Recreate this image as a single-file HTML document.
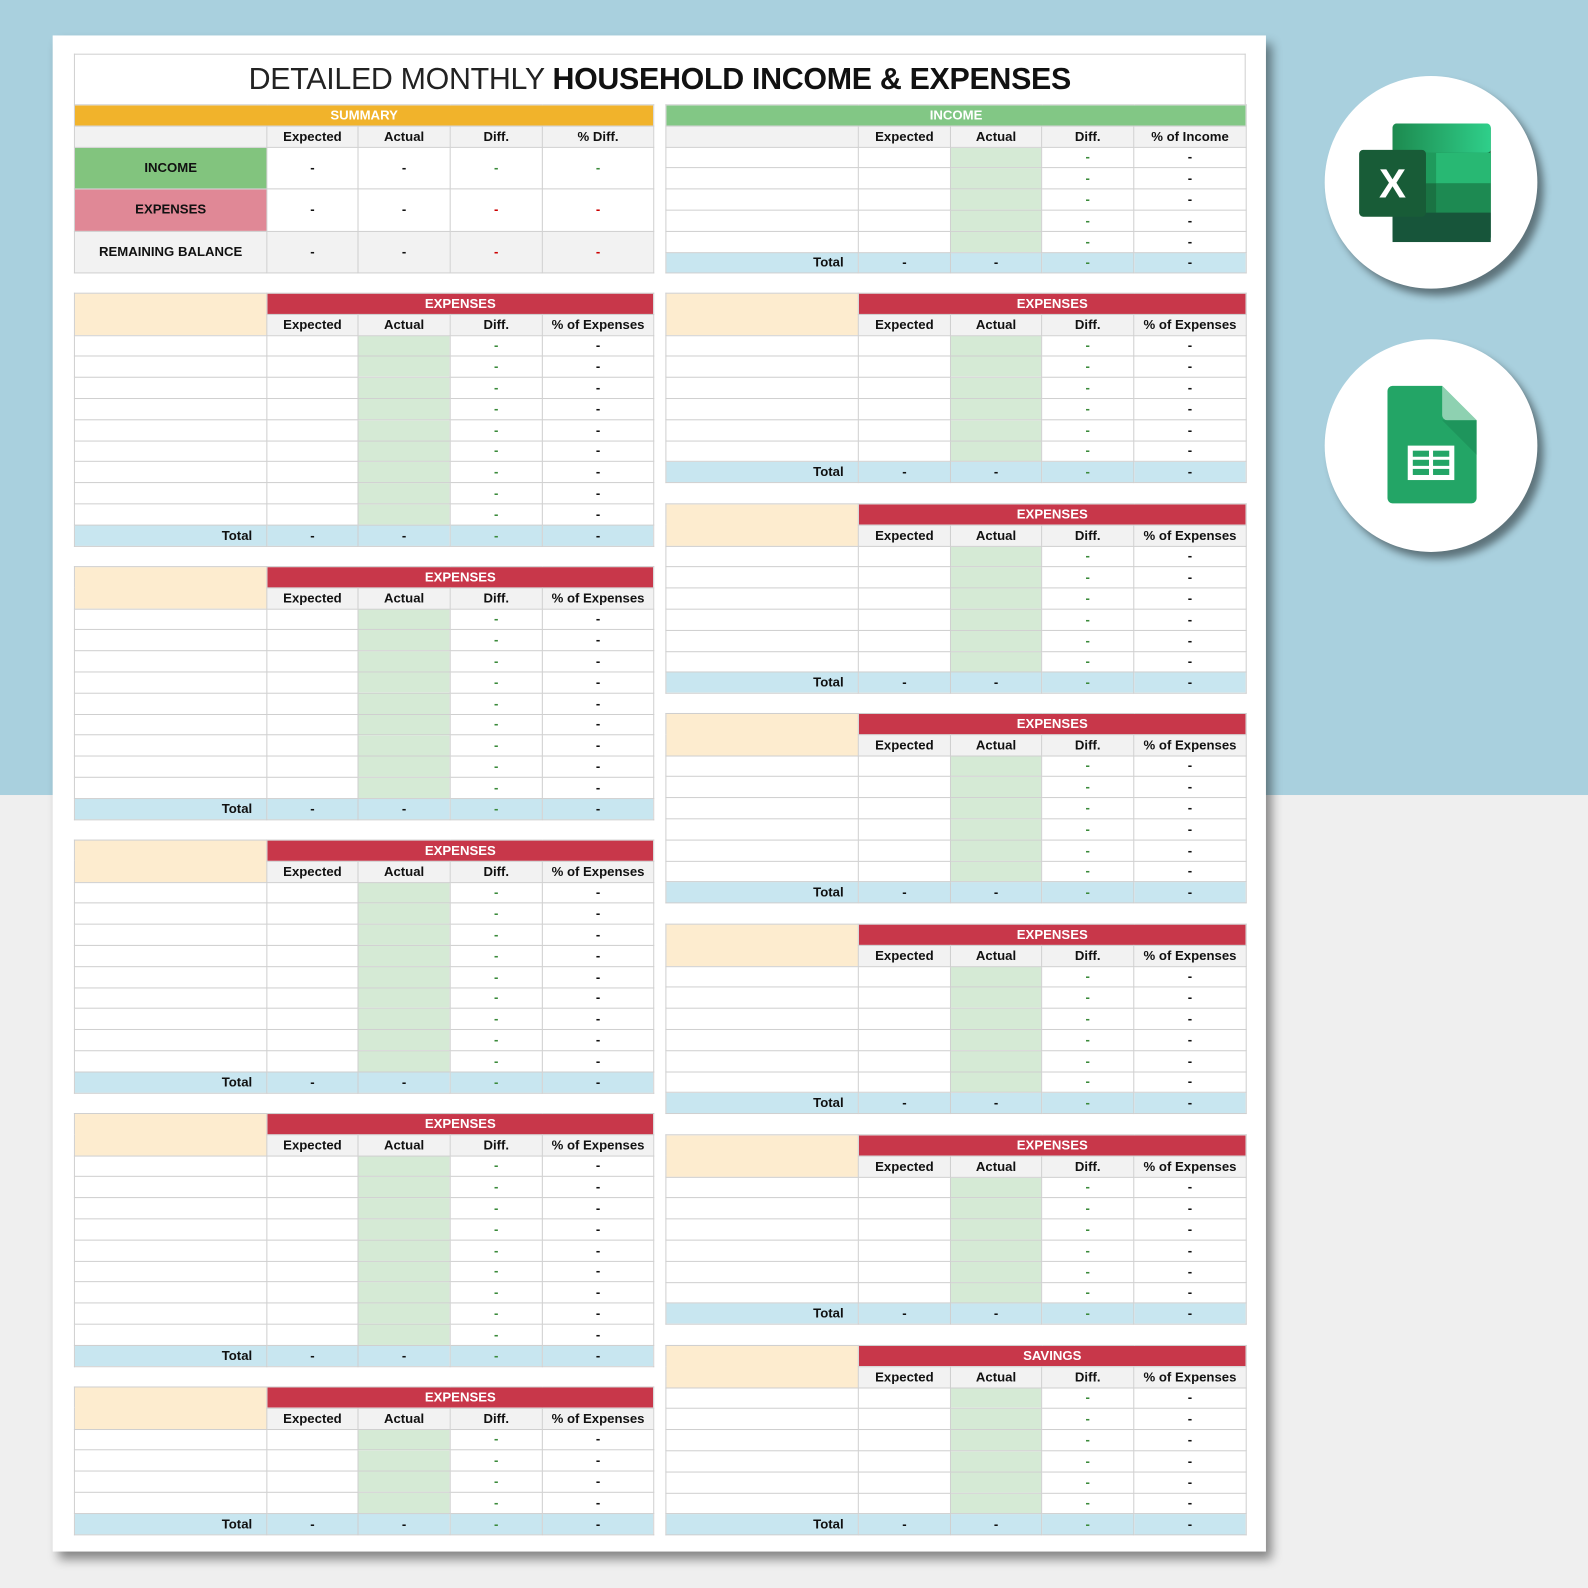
<!DOCTYPE html>
<html><head><meta charset="utf-8">
<style>
*{margin:0;padding:0;box-sizing:border-box}
body{width:1588px;height:1588px;position:relative;overflow:hidden;background:#efefef;font-family:"Liberation Sans",Arial,sans-serif}
#wrap{position:absolute;left:0;top:0;width:1568px;height:1568px;transform:scale(1.01276);transform-origin:0 0}
.topbg{position:absolute;left:0;top:0;width:1600px;height:785px;background:#a9d0de}
.paper{position:absolute;left:52px;top:35px;width:1198px;height:1497px;background:#fff;box-shadow:6px 8px 10px rgba(0,0,0,.45)}
.title{position:absolute;left:73px;top:53px;width:1157px;height:50px;border:1px solid #cfcfcf;border-bottom:none;text-align:center;font-size:30px;line-height:50px;color:#222;letter-spacing:-0.3px}
.title b{font-weight:bold;color:#111}
table.t{position:absolute;border-collapse:collapse;table-layout:fixed;font-size:13px;font-weight:bold;color:#111}
table.t td{border:1px solid #cfcfcf;height:20.8px;padding:0;text-align:center;line-height:18px;overflow:hidden;white-space:nowrap}
td.red{background:#c8374a;color:#fff;font-weight:bold}
td.yel{background:#f1b32b;color:#fff}
td.grn{background:#82c785;color:#fff}
td.bg{background:#fdeccf}
tr.ch td{background:#f2f2f2}
td.a{background:#d5ead5}
td.d{color:#3a8a3a}
td.rd{color:#c00}
tr.tot td{background:#c8e6f0}
td.r{text-align:right!important;padding-right:14px!important}
tr.big td{height:41.5px}
.circ{position:absolute;width:210px;height:210px;border-radius:50%;background:#fff;box-shadow:6px 7px 8px rgba(0,0,0,.45)}
</style></head><body>
<div id="wrap">
<div class="topbg"></div>
<div class="paper"></div>
<div class="title">DETAILED MONTHLY <b>HOUSEHOLD INCOME &amp; EXPENSES</b></div>

<table class="t" style="left:73px;top:103px;width:572px">
<colgroup><col style="width:190px"><col style="width:90px"><col style="width:91px"><col style="width:91px"><col style="width:110px"></colgroup>
<tr><td colspan="5" class="yel">SUMMARY</td></tr>
<tr class="ch"><td></td><td>Expected</td><td>Actual</td><td>Diff.</td><td>% Diff.</td></tr>
<tr class="big"><td style="background:#82c47e">INCOME</td><td>-</td><td>-</td><td class="d">-</td><td class="d">-</td></tr>
<tr class="big"><td style="background:#e08896">EXPENSES</td><td>-</td><td>-</td><td class="rd">-</td><td class="rd">-</td></tr>
<tr class="big"><td style="background:#f2f2f2">REMAINING BALANCE</td><td style="background:#f2f2f2">-</td><td style="background:#f2f2f2">-</td><td class="rd" style="background:#f2f2f2">-</td><td class="rd" style="background:#f2f2f2">-</td></tr>
</table>

<table class="t" style="left:657px;top:103px;width:573px">
<colgroup><col style="width:190px"><col style="width:91px"><col style="width:90px"><col style="width:91px"><col style="width:111px"></colgroup>
<tr><td colspan="5" class="grn">INCOME</td></tr>
<tr class="ch"><td></td><td>Expected</td><td>Actual</td><td>Diff.</td><td>% of Income</td></tr>
<tr><td></td><td></td><td class="a"></td><td class="d">-</td><td>-</td></tr>
<tr><td></td><td></td><td class="a"></td><td class="d">-</td><td>-</td></tr>
<tr><td></td><td></td><td class="a"></td><td class="d">-</td><td>-</td></tr>
<tr><td></td><td></td><td class="a"></td><td class="d">-</td><td>-</td></tr>
<tr><td></td><td></td><td class="a"></td><td class="d">-</td><td>-</td></tr>
<tr class="tot"><td class="r">Total</td><td>-</td><td>-</td><td class="d">-</td><td>-</td></tr>
</table>

<table class="t" style="left:73px;top:289px;width:572px">
<colgroup><col style="width:190px"><col style="width:90px"><col style="width:91px"><col style="width:91px"><col style="width:110px"></colgroup>
<tr><td rowspan="2" class="bg"></td><td colspan="4" class="red">EXPENSES</td></tr>
<tr class="ch"><td>Expected</td><td>Actual</td><td>Diff.</td><td>% of Expenses</td></tr>
<tr><td></td><td></td><td class="a"></td><td class="d">-</td><td>-</td></tr>
<tr><td></td><td></td><td class="a"></td><td class="d">-</td><td>-</td></tr>
<tr><td></td><td></td><td class="a"></td><td class="d">-</td><td>-</td></tr>
<tr><td></td><td></td><td class="a"></td><td class="d">-</td><td>-</td></tr>
<tr><td></td><td></td><td class="a"></td><td class="d">-</td><td>-</td></tr>
<tr><td></td><td></td><td class="a"></td><td class="d">-</td><td>-</td></tr>
<tr><td></td><td></td><td class="a"></td><td class="d">-</td><td>-</td></tr>
<tr><td></td><td></td><td class="a"></td><td class="d">-</td><td>-</td></tr>
<tr><td></td><td></td><td class="a"></td><td class="d">-</td><td>-</td></tr>
<tr class="tot"><td class="r">Total</td><td>-</td><td>-</td><td class="d">-</td><td>-</td></tr>
</table>

<table class="t" style="left:73px;top:559px;width:572px">
<colgroup><col style="width:190px"><col style="width:90px"><col style="width:91px"><col style="width:91px"><col style="width:110px"></colgroup>
<tr><td rowspan="2" class="bg"></td><td colspan="4" class="red">EXPENSES</td></tr>
<tr class="ch"><td>Expected</td><td>Actual</td><td>Diff.</td><td>% of Expenses</td></tr>
<tr><td></td><td></td><td class="a"></td><td class="d">-</td><td>-</td></tr>
<tr><td></td><td></td><td class="a"></td><td class="d">-</td><td>-</td></tr>
<tr><td></td><td></td><td class="a"></td><td class="d">-</td><td>-</td></tr>
<tr><td></td><td></td><td class="a"></td><td class="d">-</td><td>-</td></tr>
<tr><td></td><td></td><td class="a"></td><td class="d">-</td><td>-</td></tr>
<tr><td></td><td></td><td class="a"></td><td class="d">-</td><td>-</td></tr>
<tr><td></td><td></td><td class="a"></td><td class="d">-</td><td>-</td></tr>
<tr><td></td><td></td><td class="a"></td><td class="d">-</td><td>-</td></tr>
<tr><td></td><td></td><td class="a"></td><td class="d">-</td><td>-</td></tr>
<tr class="tot"><td class="r">Total</td><td>-</td><td>-</td><td class="d">-</td><td>-</td></tr>
</table>

<table class="t" style="left:73px;top:829px;width:572px">
<colgroup><col style="width:190px"><col style="width:90px"><col style="width:91px"><col style="width:91px"><col style="width:110px"></colgroup>
<tr><td rowspan="2" class="bg"></td><td colspan="4" class="red">EXPENSES</td></tr>
<tr class="ch"><td>Expected</td><td>Actual</td><td>Diff.</td><td>% of Expenses</td></tr>
<tr><td></td><td></td><td class="a"></td><td class="d">-</td><td>-</td></tr>
<tr><td></td><td></td><td class="a"></td><td class="d">-</td><td>-</td></tr>
<tr><td></td><td></td><td class="a"></td><td class="d">-</td><td>-</td></tr>
<tr><td></td><td></td><td class="a"></td><td class="d">-</td><td>-</td></tr>
<tr><td></td><td></td><td class="a"></td><td class="d">-</td><td>-</td></tr>
<tr><td></td><td></td><td class="a"></td><td class="d">-</td><td>-</td></tr>
<tr><td></td><td></td><td class="a"></td><td class="d">-</td><td>-</td></tr>
<tr><td></td><td></td><td class="a"></td><td class="d">-</td><td>-</td></tr>
<tr><td></td><td></td><td class="a"></td><td class="d">-</td><td>-</td></tr>
<tr class="tot"><td class="r">Total</td><td>-</td><td>-</td><td class="d">-</td><td>-</td></tr>
</table>

<table class="t" style="left:73px;top:1099px;width:572px">
<colgroup><col style="width:190px"><col style="width:90px"><col style="width:91px"><col style="width:91px"><col style="width:110px"></colgroup>
<tr><td rowspan="2" class="bg"></td><td colspan="4" class="red">EXPENSES</td></tr>
<tr class="ch"><td>Expected</td><td>Actual</td><td>Diff.</td><td>% of Expenses</td></tr>
<tr><td></td><td></td><td class="a"></td><td class="d">-</td><td>-</td></tr>
<tr><td></td><td></td><td class="a"></td><td class="d">-</td><td>-</td></tr>
<tr><td></td><td></td><td class="a"></td><td class="d">-</td><td>-</td></tr>
<tr><td></td><td></td><td class="a"></td><td class="d">-</td><td>-</td></tr>
<tr><td></td><td></td><td class="a"></td><td class="d">-</td><td>-</td></tr>
<tr><td></td><td></td><td class="a"></td><td class="d">-</td><td>-</td></tr>
<tr><td></td><td></td><td class="a"></td><td class="d">-</td><td>-</td></tr>
<tr><td></td><td></td><td class="a"></td><td class="d">-</td><td>-</td></tr>
<tr><td></td><td></td><td class="a"></td><td class="d">-</td><td>-</td></tr>
<tr class="tot"><td class="r">Total</td><td>-</td><td>-</td><td class="d">-</td><td>-</td></tr>
</table>

<table class="t" style="left:73px;top:1369px;width:572px">
<colgroup><col style="width:190px"><col style="width:90px"><col style="width:91px"><col style="width:91px"><col style="width:110px"></colgroup>
<tr><td rowspan="2" class="bg"></td><td colspan="4" class="red">EXPENSES</td></tr>
<tr class="ch"><td>Expected</td><td>Actual</td><td>Diff.</td><td>% of Expenses</td></tr>
<tr><td></td><td></td><td class="a"></td><td class="d">-</td><td>-</td></tr>
<tr><td></td><td></td><td class="a"></td><td class="d">-</td><td>-</td></tr>
<tr><td></td><td></td><td class="a"></td><td class="d">-</td><td>-</td></tr>
<tr><td></td><td></td><td class="a"></td><td class="d">-</td><td>-</td></tr>
<tr class="tot"><td class="r">Total</td><td>-</td><td>-</td><td class="d">-</td><td>-</td></tr>
</table>

<table class="t" style="left:657px;top:289px;width:573px">
<colgroup><col style="width:190px"><col style="width:91px"><col style="width:90px"><col style="width:91px"><col style="width:111px"></colgroup>
<tr><td rowspan="2" class="bg"></td><td colspan="4" class="red">EXPENSES</td></tr>
<tr class="ch"><td>Expected</td><td>Actual</td><td>Diff.</td><td>% of Expenses</td></tr>
<tr><td></td><td></td><td class="a"></td><td class="d">-</td><td>-</td></tr>
<tr><td></td><td></td><td class="a"></td><td class="d">-</td><td>-</td></tr>
<tr><td></td><td></td><td class="a"></td><td class="d">-</td><td>-</td></tr>
<tr><td></td><td></td><td class="a"></td><td class="d">-</td><td>-</td></tr>
<tr><td></td><td></td><td class="a"></td><td class="d">-</td><td>-</td></tr>
<tr><td></td><td></td><td class="a"></td><td class="d">-</td><td>-</td></tr>
<tr class="tot"><td class="r">Total</td><td>-</td><td>-</td><td class="d">-</td><td>-</td></tr>
</table>

<table class="t" style="left:657px;top:497px;width:573px">
<colgroup><col style="width:190px"><col style="width:91px"><col style="width:90px"><col style="width:91px"><col style="width:111px"></colgroup>
<tr><td rowspan="2" class="bg"></td><td colspan="4" class="red">EXPENSES</td></tr>
<tr class="ch"><td>Expected</td><td>Actual</td><td>Diff.</td><td>% of Expenses</td></tr>
<tr><td></td><td></td><td class="a"></td><td class="d">-</td><td>-</td></tr>
<tr><td></td><td></td><td class="a"></td><td class="d">-</td><td>-</td></tr>
<tr><td></td><td></td><td class="a"></td><td class="d">-</td><td>-</td></tr>
<tr><td></td><td></td><td class="a"></td><td class="d">-</td><td>-</td></tr>
<tr><td></td><td></td><td class="a"></td><td class="d">-</td><td>-</td></tr>
<tr><td></td><td></td><td class="a"></td><td class="d">-</td><td>-</td></tr>
<tr class="tot"><td class="r">Total</td><td>-</td><td>-</td><td class="d">-</td><td>-</td></tr>
</table>

<table class="t" style="left:657px;top:704px;width:573px">
<colgroup><col style="width:190px"><col style="width:91px"><col style="width:90px"><col style="width:91px"><col style="width:111px"></colgroup>
<tr><td rowspan="2" class="bg"></td><td colspan="4" class="red">EXPENSES</td></tr>
<tr class="ch"><td>Expected</td><td>Actual</td><td>Diff.</td><td>% of Expenses</td></tr>
<tr><td></td><td></td><td class="a"></td><td class="d">-</td><td>-</td></tr>
<tr><td></td><td></td><td class="a"></td><td class="d">-</td><td>-</td></tr>
<tr><td></td><td></td><td class="a"></td><td class="d">-</td><td>-</td></tr>
<tr><td></td><td></td><td class="a"></td><td class="d">-</td><td>-</td></tr>
<tr><td></td><td></td><td class="a"></td><td class="d">-</td><td>-</td></tr>
<tr><td></td><td></td><td class="a"></td><td class="d">-</td><td>-</td></tr>
<tr class="tot"><td class="r">Total</td><td>-</td><td>-</td><td class="d">-</td><td>-</td></tr>
</table>

<table class="t" style="left:657px;top:912px;width:573px">
<colgroup><col style="width:190px"><col style="width:91px"><col style="width:90px"><col style="width:91px"><col style="width:111px"></colgroup>
<tr><td rowspan="2" class="bg"></td><td colspan="4" class="red">EXPENSES</td></tr>
<tr class="ch"><td>Expected</td><td>Actual</td><td>Diff.</td><td>% of Expenses</td></tr>
<tr><td></td><td></td><td class="a"></td><td class="d">-</td><td>-</td></tr>
<tr><td></td><td></td><td class="a"></td><td class="d">-</td><td>-</td></tr>
<tr><td></td><td></td><td class="a"></td><td class="d">-</td><td>-</td></tr>
<tr><td></td><td></td><td class="a"></td><td class="d">-</td><td>-</td></tr>
<tr><td></td><td></td><td class="a"></td><td class="d">-</td><td>-</td></tr>
<tr><td></td><td></td><td class="a"></td><td class="d">-</td><td>-</td></tr>
<tr class="tot"><td class="r">Total</td><td>-</td><td>-</td><td class="d">-</td><td>-</td></tr>
</table>

<table class="t" style="left:657px;top:1120px;width:573px">
<colgroup><col style="width:190px"><col style="width:91px"><col style="width:90px"><col style="width:91px"><col style="width:111px"></colgroup>
<tr><td rowspan="2" class="bg"></td><td colspan="4" class="red">EXPENSES</td></tr>
<tr class="ch"><td>Expected</td><td>Actual</td><td>Diff.</td><td>% of Expenses</td></tr>
<tr><td></td><td></td><td class="a"></td><td class="d">-</td><td>-</td></tr>
<tr><td></td><td></td><td class="a"></td><td class="d">-</td><td>-</td></tr>
<tr><td></td><td></td><td class="a"></td><td class="d">-</td><td>-</td></tr>
<tr><td></td><td></td><td class="a"></td><td class="d">-</td><td>-</td></tr>
<tr><td></td><td></td><td class="a"></td><td class="d">-</td><td>-</td></tr>
<tr><td></td><td></td><td class="a"></td><td class="d">-</td><td>-</td></tr>
<tr class="tot"><td class="r">Total</td><td>-</td><td>-</td><td class="d">-</td><td>-</td></tr>
</table>

<table class="t" style="left:657px;top:1328px;width:573px">
<colgroup><col style="width:190px"><col style="width:91px"><col style="width:90px"><col style="width:91px"><col style="width:111px"></colgroup>
<tr><td rowspan="2" class="bg"></td><td colspan="4" class="red">SAVINGS</td></tr>
<tr class="ch"><td>Expected</td><td>Actual</td><td>Diff.</td><td>% of Expenses</td></tr>
<tr><td></td><td></td><td class="a"></td><td class="d">-</td><td>-</td></tr>
<tr><td></td><td></td><td class="a"></td><td class="d">-</td><td>-</td></tr>
<tr><td></td><td></td><td class="a"></td><td class="d">-</td><td>-</td></tr>
<tr><td></td><td></td><td class="a"></td><td class="d">-</td><td>-</td></tr>
<tr><td></td><td></td><td class="a"></td><td class="d">-</td><td>-</td></tr>
<tr><td></td><td></td><td class="a"></td><td class="d">-</td><td>-</td></tr>
<tr class="tot"><td class="r">Total</td><td>-</td><td>-</td><td class="d">-</td><td>-</td></tr>
</table>

<div class="circ" style="left:1308px;top:75px"></div>
<svg style="position:absolute;left:1308px;top:75px" width="210" height="210" viewBox="0 0 210 210">
<defs><linearGradient id="g1" x1="0" y1="0" x2="1" y2="0"><stop offset="0" stop-color="#1d8a4f"/><stop offset="1" stop-color="#2fcf8a"/></linearGradient></defs>
<rect x="67" y="47" width="97" height="117" rx="5" fill="#1a7343"/>
<rect x="67" y="47" width="97" height="29" rx="4" fill="url(#g1)"/>
<rect x="67" y="76" width="97" height="30" fill="#1f9a5c"/>
<rect x="110" y="76" width="54" height="30" fill="#28b873"/>
<rect x="110" y="106" width="54" height="29" fill="#1d8a52"/>
<rect x="67" y="135" width="97" height="29" fill="#17553a"/>
<rect x="34" y="73" width="66" height="66" rx="4" fill="#185c37"/>
<text x="67" y="120" text-anchor="middle" font-family="Liberation Sans,sans-serif" font-weight="bold" font-size="40" fill="#fff">X</text>
</svg>
<div class="circ" style="left:1308px;top:335px"></div>
<svg style="position:absolute;left:1308px;top:335px" width="210" height="210" viewBox="0 0 210 210">
<path d="M67 46 H116 L150 80 V157 a5 5 0 0 1 -5 5 H67 a5 5 0 0 1 -5 -5 V51 a5 5 0 0 1 5 -5z" fill="#23a566"/>
<path d="M116 46 L150 80 H121 a5 5 0 0 1 -5 -5z" fill="#8ed1b1"/>
<path d="M116 80 L150 114 V80z" fill="#1a8a55" opacity=".6"/>
<rect x="82" y="105" width="46" height="34" fill="#fff"/>
<rect x="87" y="110" width="16" height="6" fill="#23a566"/><rect x="107" y="110" width="16" height="6" fill="#23a566"/>
<rect x="87" y="119" width="16" height="6" fill="#23a566"/><rect x="107" y="119" width="16" height="6" fill="#23a566"/>
<rect x="87" y="128" width="16" height="6" fill="#23a566"/><rect x="107" y="128" width="16" height="6" fill="#23a566"/>
</svg>
</div>
</body></html>
